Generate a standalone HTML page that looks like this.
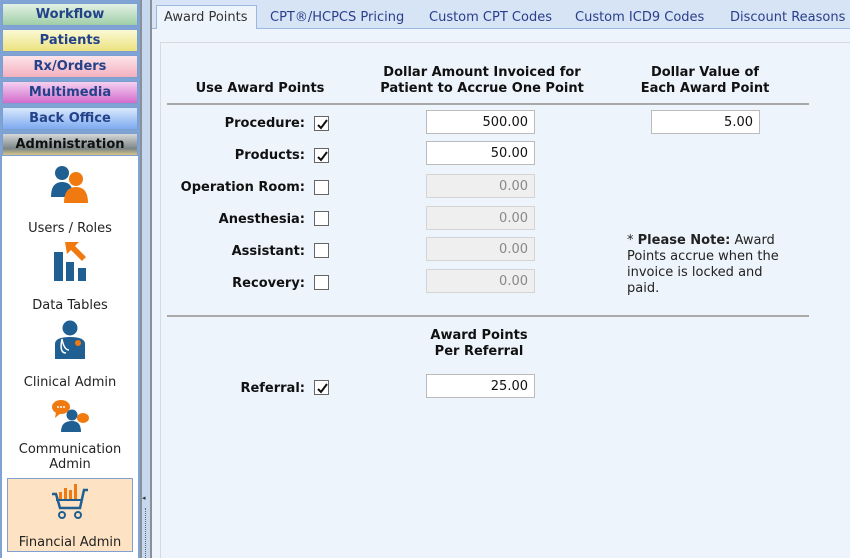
<!DOCTYPE html>
<html><head><style>
*{margin:0;padding:0;box-sizing:border-box}
body{width:850px;height:558px;overflow:hidden;position:relative;background:#d6e4f6;font-family:"DejaVu Sans","Liberation Sans",sans-serif;color:#111}
.a{position:absolute}
.nav{position:absolute;left:2px;width:136px;height:23px;border:1px solid #7c9fd0;font-weight:bold;font-size:13px;text-align:center;line-height:21px;color:#23428a}
.side{position:absolute;left:0;top:0;width:140px;height:558px;background:#7fa3d4}
.lbl{position:absolute;left:0;width:140px;text-align:center;font-size:13px;color:#222}
.bl{position:absolute;font-weight:bold;font-size:13px;text-align:right;width:160px;left:145px}
.cb{position:absolute;left:314px;width:15px;height:15px;border:1px solid #666;background:#fff}
.cb svg{position:absolute;left:1px;top:1px}
.in{position:absolute;left:426px;width:109px;height:24px;border:1px solid #bbb;background:#fff;font-size:13px;text-align:right;padding-right:6px;line-height:23px}
.dis{background:#efefef;color:#888;border-color:#d4d4d4}
.h{position:absolute;font-weight:bold;font-size:13px;text-align:center;line-height:16px}
.tab{position:absolute;top:6px;font-size:13px;color:#2a3e8a;line-height:24px}
</style></head><body>
<div class="side"></div>
<div class="a" style="left:2px;top:156px;width:136px;height:402px;background:#fff"></div>
<div class="nav" style="top:3px;background:linear-gradient(#e3f1e6,#9fcfa6)">Workflow</div>
<div class="nav" style="top:29px;background:linear-gradient(#fbf9d6,#ece27e)">Patients</div>
<div class="nav" style="top:55px;background:linear-gradient(#fde4ea,#f4b0bf)">Rx/Orders</div>
<div class="nav" style="top:81px;background:linear-gradient(#f3d1f0,#d46ccd)">Multimedia</div>
<div class="nav" style="top:107px;background:linear-gradient(#d9e8fb,#7eaaf0)">Back Office</div>
<div class="nav" style="top:133px;background:linear-gradient(#d6d8d8,#7b8586 70%,#d7c58a);color:#111">Administration</div>
<svg class="a" style="left:50px;top:165px" width="40" height="40" viewBox="0 0 40 40"><circle cx="12" cy="8" r="7" fill="#1f5f92"/><path d="M1 32 Q1 17 12 17 Q20 17 22 24 L18 32Z" fill="#1f5f92"/><circle cx="26" cy="14" r="7" fill="#f07a10"/><path d="M14 38 Q14 22 26 22 Q38 22 38 38Z" fill="#f07a10"/></svg>
<div class="lbl" style="top:221px">Users / Roles</div>
<svg class="a" style="left:50px;top:241px" width="40" height="42" viewBox="0 0 40 42"><rect x="4" y="11" width="9" height="29" fill="#1f5f92"/><rect x="16" y="21" width="8" height="19" fill="#1f5f92"/><rect x="28" y="27" width="8" height="13" fill="#1f5f92"/><path d="M15 1 L29 1 L25 5 L36 16 L32 20 L21 9 L17 13Z" fill="#f07a10"/></svg>
<div class="lbl" style="top:298px">Data Tables</div>
<svg class="a" style="left:52px;top:320px" width="36" height="40" viewBox="0 0 36 40"><circle cx="18" cy="8" r="7.5" fill="#1f5f92"/><path d="M3 39 L3 24 Q3 17 18 17 Q33 17 33 24 L33 39Z" fill="#1f5f92"/><path d="M10 19 Q7 33 14 33 M10 19 Q12 30 17 30" stroke="#fff" stroke-width="1.5" fill="none"/><circle cx="26" cy="23" r="3" fill="#f07a10"/></svg>
<div class="lbl" style="top:375px">Clinical Admin</div>
<svg class="a" style="left:50px;top:398px" width="40" height="36" viewBox="0 0 40 36"><ellipse cx="11" cy="9" rx="9" ry="7" fill="#f07a10"/><path d="M6 14 L5 20 L11 15Z" fill="#f07a10"/><circle cx="22" cy="17" r="5.5" fill="#1f5f92"/><path d="M11 34 Q11 23 22 23 Q31 23 31 34Z" fill="#1f5f92"/><ellipse cx="33" cy="20" rx="6" ry="5" fill="#f07a10"/><circle cx="8" cy="9" r="1" fill="#fff"/><circle cx="11" cy="9" r="1" fill="#fff"/><circle cx="14" cy="9" r="1" fill="#fff"/></svg>
<div class="lbl" style="top:442px;line-height:15px">Communication<br>Admin</div>
<div class="a" style="left:7px;top:478px;width:126px;height:74px;background:#fde2c4;border:1px solid #7fa0d0"></div>
<svg class="a" style="left:50px;top:482px" width="40" height="40" viewBox="0 0 40 40"><rect x="9" y="10" width="3" height="8" fill="#f07a10"/><rect x="14" y="6" width="3" height="12" fill="#f07a10"/><rect x="19" y="8" width="3" height="10" fill="#f07a10"/><rect x="24" y="2" width="3" height="16" fill="#f07a10"/><path d="M2 12 L6 12 L10 26 L30 26 L34 8 L38 8" stroke="#1f5f92" stroke-width="2.5" fill="none"/><path d="M6 18 L32 18" stroke="#1f5f92" stroke-width="2"/><circle cx="12" cy="33" r="3" stroke="#1f5f92" stroke-width="2" fill="none"/><circle cx="28" cy="33" r="3" stroke="#1f5f92" stroke-width="2" fill="none"/></svg>
<div class="lbl" style="top:535px">Financial Admin</div>
<div class="a" style="left:140px;top:0;width:12px;height:558px;background:#c6d8ee;border-left:2px solid #8a8f98;border-right:2px solid #8a8f98"></div>
<div class="a" style="left:142px;top:494px;width:8px;height:10px;font-size:7px;color:#333">◂</div>
<div class="a" style="left:145px;top:508px;width:2px;height:50px;border-left:1px dotted #666"></div>
<div class="a" style="left:152px;top:28px;width:698px;height:530px;background:#eef4fc;border-top:1px solid #9bb8e0"></div>
<div class="a" style="left:156px;top:5px;width:101px;height:24px;background:#eef4fc;border:1px solid #9bb8e0;border-bottom:none"></div>
<div class="tab" style="left:164px;color:#333">Award Points</div>
<div class="tab" style="left:270px">CPT®/HCPCS Pricing</div>
<div class="tab" style="left:429px">Custom CPT Codes</div>
<div class="tab" style="left:575px">Custom ICD9 Codes</div>
<div class="tab" style="left:730px;white-space:nowrap">Discount Reasons</div>
<div class="a" style="left:160px;top:42px;width:690px;height:516px;border-left:1px solid #d6dbe2;border-top:1px solid #d6dbe2"></div>
<div class="h" style="left:160px;top:81px;width:200px">Use Award Points</div>
<div class="h" style="left:360px;top:65px;width:244px">Dollar Amount Invoiced for<br>Patient to Accrue One Point</div>
<div class="h" style="left:600px;top:65px;width:210px">Dollar Value of<br>Each Award Point</div>
<div class="a" style="left:167px;top:103px;width:642px;height:2px;background:#a9a9a9"></div>
<div class="bl" style="top:116px">Procedure:</div><div class="cb" style="top:116px"><svg width="13" height="13"><path d="M2 7 L5 10 L11 2" stroke="#111" stroke-width="2" fill="none"/></svg></div><div class="in" style="top:110px">500.00</div>
<div class="in" style="top:110px;left:651px">5.00</div>
<div class="bl" style="top:148px">Products:</div><div class="cb" style="top:148px"><svg width="13" height="13"><path d="M2 7 L5 10 L11 2" stroke="#111" stroke-width="2" fill="none"/></svg></div><div class="in" style="top:141px">50.00</div>
<div class="bl" style="top:180px">Operation Room:</div><div class="cb" style="top:180px"></div><div class="in dis" style="top:174px">0.00</div>
<div class="bl" style="top:212px">Anesthesia:</div><div class="cb" style="top:211px"></div><div class="in dis" style="top:206px">0.00</div>
<div class="bl" style="top:244px">Assistant:</div><div class="cb" style="top:243px"></div><div class="in dis" style="top:237px">0.00</div>
<div class="bl" style="top:276px">Recovery:</div><div class="cb" style="top:275px"></div><div class="in dis" style="top:269px">0.00</div>
<div class="a" style="left:627px;top:233px;width:168px;font-size:13px;line-height:16px;color:#222">* <b>Please Note:</b>&nbsp;Award Points accrue when the invoice is locked and paid.</div>
<div class="a" style="left:167px;top:315px;width:642px;height:2px;background:#a9a9a9"></div>
<div class="h" style="left:380px;top:328px;width:198px">Award Points<br>Per Referral</div>
<div class="bl" style="top:381px">Referral:</div><div class="cb" style="top:380px"><svg width="13" height="13"><path d="M2 7 L5 10 L11 2" stroke="#111" stroke-width="2" fill="none"/></svg></div><div class="in" style="top:374px">25.00</div>
</body></html>
